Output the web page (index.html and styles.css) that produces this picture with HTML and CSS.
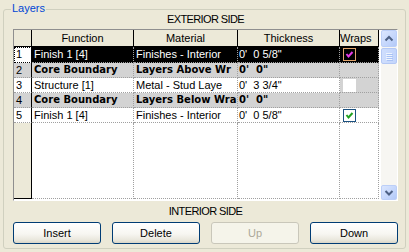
FILE: index.html
```html
<!DOCTYPE html>
<html>
<head>
<meta charset="utf-8">
<link rel="stylesheet" href="styles.css">
</head>
<body>
<div class="group">
  <div class="legend">Layers</div>
  <div class="side top-side">EXTERIOR SIDE</div>
  <div class="grid">
    <div class="table">
      <div class="row head">
        <div class="c num"></div>
        <div class="c fn">Function</div>
        <div class="c mat">Material</div>
        <div class="c th">Thickness</div>
        <div class="c wr">Wraps</div>
      </div>
      <div class="row sel first">
        <div class="c num focus">1</div>
        <div class="c fn">Finish 1 [4]</div>
        <div class="c mat">Finishes - Interior</div>
        <div class="c th">0'  0 5/8"</div>
        <div class="c wr"><span class="cb cb-sel"><svg width="11" height="11" viewBox="0 0 11 11"><polyline points="2.5,5 4.5,7.5 8.5,3" fill="none" stroke="#e53ae5" stroke-width="2"/></svg></span></div>
      </div>
      <div class="row core">
        <div class="c num">2</div>
        <div class="c fn">Core Boundary</div>
        <div class="c mat">Layers Above Wr</div>
        <div class="c th">0'  0"</div>
        <div class="c wr"></div>
      </div>
      <div class="row">
        <div class="c num">3</div>
        <div class="c fn">Structure [1]</div>
        <div class="c mat">Metal - Stud Laye</div>
        <div class="c th">0'  3 3/4"</div>
        <div class="c wr dis"><span class="cb cb-dis"></span></div>
      </div>
      <div class="row core">
        <div class="c num">4</div>
        <div class="c fn">Core Boundary</div>
        <div class="c mat">Layers Below Wra</div>
        <div class="c th">0'  0"</div>
        <div class="c wr"></div>
      </div>
      <div class="row">
        <div class="c num">5</div>
        <div class="c fn">Finish 1 [4]</div>
        <div class="c mat">Finishes - Interior</div>
        <div class="c th">0'  0 5/8"</div>
        <div class="c wr"><span class="cb cb-on"><svg width="11" height="11" viewBox="0 0 11 11"><polyline points="2.5,5 4.5,7.5 8.5,3" fill="none" stroke="#21a121" stroke-width="2"/></svg></span></div>
      </div>
      <div class="row filler">
        <div class="c num"></div>
        <div class="c fn"></div>
        <div class="c mat"></div>
        <div class="c th"></div>
        <div class="c wr"></div>
      </div>
    </div>
    <div class="gap"></div>
    <div class="scroll">
      <div class="sbtn up"><svg width="14" height="15" viewBox="0 0 14 15"><polyline points="3.5,9.5 7,6 10.5,9.5" fill="none" stroke="#4d6185" stroke-width="2"/></svg></div>
      <div class="thumb"><span></span><span></span><span></span><span></span></div>
      <div class="track"></div>
      <div class="sbtn down"><svg width="14" height="14" viewBox="0 0 14 14"><polyline points="3.5,5 7,8.5 10.5,5" fill="none" stroke="#4d6185" stroke-width="2"/></svg></div>
    </div>
  </div>
  <div class="side bottom-side">INTERIOR SIDE</div>
  <div class="buttons">
    <button class="btn">Insert</button>
    <button class="btn">Delete</button>
    <button class="btn disabled">Up</button>
    <button class="btn">Down</button>
  </div>
</div>
</body>
</html>
```
FILE: styles.css
```css
html, body {
  margin: 0;
  padding: 0;
}
body {
  width: 409px;
  height: 252px;
  overflow: hidden;
  background: #ece9d8;
  font: 11px "Liberation Sans", Arial, sans-serif;
  color: #000;
}
.group {
  position: relative;
  box-sizing: border-box;
  margin: 9px 0 0 3px;
  width: 403px;
  height: 240px;
  border: 1px solid #d0d0bf;
  border-radius: 3px;
  padding: 0 7px 0 9px;
}
.legend {
  position: absolute;
  top: -8px;
  left: 7px;
  padding: 0 1px;
  background: #ece9d8;
  color: #0046d5;
  line-height: 13px;
}
.side {
  text-align: center;
  line-height: 14px;
  height: 14px;
  letter-spacing: -0.6px;
}
.top-side {
  margin: 2px 0 3px;
}
.bottom-side {
  margin: 3px 0 4px;
}
.grid {
  display: flex;
  height: 172px;
  box-sizing: border-box;
  border-top: 1px solid #8f8f8f;
  border-left: 1px solid #8f8f8f;
  border-right: 1px solid #fff;
  border-bottom: 1px solid #fff;
  background: #fff;
}
.table {
  width: 365px;
  height: 169px;
  display: flex;
  flex-direction: column;
}
.gap {
  width: 2px;
}
.row {
  display: flex;
  height: 15px;
  box-sizing: border-box;
  line-height: 14px;
}
.row.first {
  height: 16px;
}
.c {
  box-sizing: border-box;
  border-right: 1px dotted #a0a0a0;
  border-bottom: 1px dotted #a0a0a0;
  padding-left: 2px;
  white-space: pre;
  overflow: hidden;
}
.num { width: 18px; border-right: 1px solid #000; }
.fn { width: 102px; }
.mat { width: 104px; }
.th { width: 102px; padding-left: 1px; }
.wr { width: 39px; padding-left: 3px; display: flex; align-items: center; }

.head {
  height: 17px;
  line-height: 16px;
}
.head .c {
  background: #ece9d8;
  border-right: 1px solid #000;
  border-bottom: 1px solid #000;
  text-align: center;
  padding-left: 0;
}
.sel .c {
  background: #000;
  color: #fff;
}
.sel .num.focus {
  background: #fff;
  color: #000;
  outline: 1px dotted #000;
  outline-offset: -1px;
}
.core .c {
  background: #d3d3d3;
  font: bold 10px "DejaVu Sans", Verdana, sans-serif;
  line-height: 14px;
}
.core .num {
  font: 11px "Liberation Sans", Arial, sans-serif;
  line-height: 14px;
}
.wr.dis {
  background: #d3d3d3;
}
.filler {
  flex: 1;
}
.filler .num {
  background: #ece9d8;
  border-bottom: 1px solid #000;
}

.cb {
  box-sizing: border-box;
  width: 13px;
  height: 13px;
  display: block;
}
.cb svg { display: block; margin: 0; }
.cb-sel {
  border: 1px solid #e0a46c;
  background: #000;
}
.cb-on {
  border: 1px solid #1c5180;
  background: #fff;
}
.cb-dis {
  background: #fff;
}

.scroll {
  width: 16px;
  display: flex;
  flex-direction: column;
  background: #f7f6f2;
}
.sbtn {
  box-sizing: border-box;
  width: 16px;
  border: 1px solid #bccff8;
  border-radius: 2px;
  background: linear-gradient(135deg, #dbe6fe 0%, #c4d6fc 60%, #b3c9f7 100%);
}
.sbtn svg { display: block; margin: 0 auto; }
.up { height: 17px; }
.down { height: 15px; }
.thumb {
  box-sizing: border-box;
  height: 16px;
  margin-top: 1px;
  border: 1px solid #b4c8f5;
  border-radius: 2px;
  background: linear-gradient(90deg, #cfdefd 0%, #c3d5fb 100%);
  display: flex;
  flex-direction: column;
  align-items: center;
  justify-content: center;
  gap: 1px;
}
.thumb span {
  display: block;
  width: 6px;
  height: 1px;
  background: #eef4fe;
  box-shadow: 1px 1px 0 #a9c2f5;
}
.track {
  flex: 1;
}

.buttons {
  display: grid;
  grid-template-columns: 88px 88px 88px 88px;
  column-gap: 11px;
}
.btn {
  box-sizing: border-box;
  height: 22px;
  margin: 0;
  padding: 0;
  font: 11px "Liberation Sans", Arial, sans-serif;
  color: #000;
  border: 1px solid #003c74;
  border-radius: 3px;
  background: linear-gradient(180deg, #ffffff 0%, #f7f6f1 55%, #e9e7dc 85%, #d8d5c8 100%);
}
.btn.disabled {
  color: #aca899;
  border-color: #c9c7ba;
  background: #f5f4ea;
}
```
